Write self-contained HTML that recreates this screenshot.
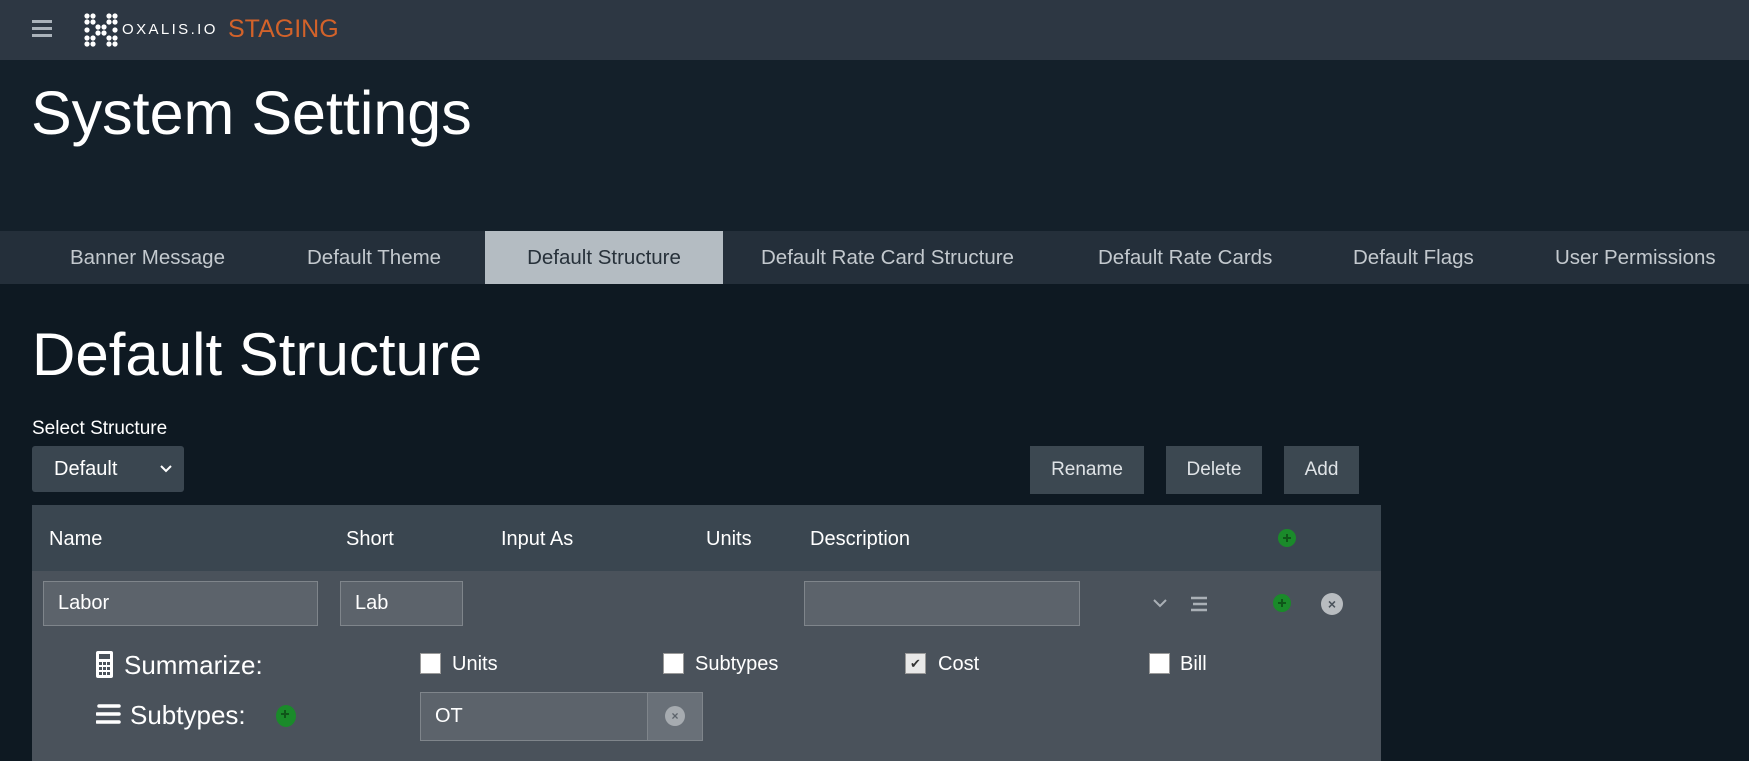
<!DOCTYPE html>
<html><head><meta charset="utf-8"><style>
*{box-sizing:border-box;margin:0;padding:0}
body{width:1749px;height:761px;overflow:hidden;background:#0e1922;font-family:"Liberation Sans",sans-serif;color:#fff;position:relative}
.a{position:absolute}
.nav{left:0;top:0;width:1749px;height:60px;background:#2d3743}
.hero{left:0;top:60px;width:1749px;height:171px;background:#14202a}
.tabs{left:0;top:231px;width:1749px;height:53px;background:#242f3a}
.tab{top:231px;height:53px;line-height:53px;font-size:20.5px;color:#c3c9ce}
.act{left:485px;width:238px;background:#b4bcc2;color:#27313a;text-align:center}
.btn{top:446px;height:48px;line-height:48px;background:#3c4851;color:#dfe3e6;font-size:19px;text-align:center}
.hd{left:32px;top:505px;width:1349px;height:66px;background:#3a4650}
.bd{left:32px;top:571px;width:1349px;height:190px;background:#4a525b}
.hl{top:528px;font-size:20px;color:#fff}
.in{height:45px;background:#5c636b;border:1px solid #7f858b;font-size:20px;line-height:43px;padding-left:14px;color:#fff}
.cb{width:21px;height:21px;background:#fff;border:1px solid #999}
.lbl{font-size:20px;color:#fff}
.plus{width:18px;height:18px;border-radius:50%;background:#1a8a2a}
.plus:before,.plus:after{content:"";position:absolute;left:5px;top:8px;width:8px;height:2px;background:#0f5519}
.plus:after{left:8px;top:5px;width:2px;height:8px}
.x{width:22px;height:22px;border-radius:50%;background:#b8bcc0;color:#4a525b;font-size:14px;line-height:22px;text-align:center;font-weight:bold}
.light{color:#fff;-webkit-text-stroke:0;font-weight:normal}
</style></head><body>
<div class="a nav"></div>
<div class="a" style="left:32px;top:20px;width:20px;height:3px;background:#aab2ba;box-shadow:0 7px 0 #aab2ba,0 14px 0 #aab2ba"></div>
<svg class="a" style="left:84px;top:13px" width="34" height="34" viewBox="0 0 34 34" fill="#fff">
<g><circle cx="3" cy="3" r="2.6"/><circle cx="9" cy="3" r="2.6"/><circle cx="25" cy="3" r="2.6"/><circle cx="31" cy="3" r="2.6"/><circle cx="9" cy="9" r="2.6"/><circle cx="25" cy="9" r="2.6"/><circle cx="3" cy="9" r="2.6"/><circle cx="31" cy="9" r="2.6"/><circle cx="14" cy="14" r="2.6"/><circle cx="20" cy="14" r="2.6"/><circle cx="14" cy="20" r="2.6"/><circle cx="20" cy="20" r="2.6"/><circle cx="3" cy="17" r="2.6"/><circle cx="31" cy="17" r="2.6"/><circle cx="9" cy="25" r="2.6"/><circle cx="25" cy="25" r="2.6"/><circle cx="3" cy="25" r="2.6"/><circle cx="31" cy="25" r="2.6"/><circle cx="3" cy="31" r="2.6"/><circle cx="9" cy="31" r="2.6"/><circle cx="25" cy="31" r="2.6"/><circle cx="31" cy="31" r="2.6"/></g></svg>
<div class="a" style="left:122px;top:20px;font-size:15px;letter-spacing:2.4px;color:#fff;line-height:20px">OXALIS.IO</div>
<div class="a" style="left:228px;top:14px;font-size:25px;color:#d2622a;line-height:30px">STAGING</div>
<div class="a hero"></div>
<div class="a" style="left:31px;top:76px;font-size:61px;color:#fff;line-height:74px">System Settings</div>
<div class="a tabs"></div>
<div class="a tab act">Default Structure</div>
<div class="a tab" style="left:70px">Banner Message</div>
<div class="a tab" style="left:307px">Default Theme</div>
<div class="a tab" style="left:761px">Default Rate Card Structure</div>
<div class="a tab" style="left:1098px">Default Rate Cards</div>
<div class="a tab" style="left:1353px">Default Flags</div>
<div class="a tab" style="left:1555px">User Permissions</div>
<div class="a" style="left:32px;top:319px;font-size:60px;color:#fff;line-height:72px">Default Structure</div>
<div class="a" style="left:32px;top:418px;font-size:19px;color:#fff">Select Structure</div>
<div class="a" style="left:32px;top:446px;width:152px;height:46px;background:#3a4650;border-radius:3px;font-size:20px;line-height:46px;padding-left:22px">Default<svg style="position:absolute;right:12px;top:19px" width="12" height="8"><path d="M1 1l5 5 5-5" stroke="#fff" stroke-width="2" fill="none"/></svg></div>
<div class="a btn" style="left:1030px;width:114px">Rename</div>
<div class="a btn" style="left:1166px;width:96px">Delete</div>
<div class="a btn" style="left:1284px;width:75px">Add</div>
<div class="a hd"></div><div class="a bd"></div>
<div class="a hl" style="left:49px">Name</div>
<div class="a hl" style="left:346px">Short</div>
<div class="a hl" style="left:501px">Input As</div>
<div class="a hl" style="left:706px">Units</div>
<div class="a hl" style="left:810px">Description</div>
<div class="a plus" style="left:1278px;top:529px"></div>
<div class="a in" style="left:43px;top:581px;width:275px">Labor</div>
<div class="a in" style="left:340px;top:581px;width:123px">Lab</div>
<div class="a in" style="left:804px;top:581px;width:276px"></div>
<svg class="a" style="left:1152px;top:597px" width="16" height="12"><path d="M2 3l6 6 6-6" stroke="#aab0b6" stroke-width="2" fill="none"/></svg>
<svg class="a" style="left:1190px;top:596px" width="20" height="16"><path d="M1 2h16M3 8h14M1 14h16" stroke="#aab0b6" stroke-width="2.5"/></svg>
<div class="a plus" style="left:1273px;top:594px"></div>
<div class="a x" style="left:1321px;top:593px">×</div>
<svg class="a" style="left:96px;top:651px" width="17" height="27"><rect x="0" y="0" width="17" height="27" rx="2" fill="#fff"/><rect x="3" y="3" width="11" height="5" fill="#4a525b"/><g fill="#4a525b"><rect x="3" y="11" width="3" height="3"/><rect x="7" y="11" width="3" height="3"/><rect x="11" y="11" width="3" height="3"/><rect x="3" y="16" width="3" height="3"/><rect x="7" y="16" width="3" height="3"/><rect x="11" y="16" width="3" height="3"/><rect x="3" y="21" width="3" height="3"/><rect x="7" y="21" width="3" height="3"/><rect x="11" y="21" width="3" height="3"/></g></svg>
<div class="a" style="left:124px;top:650px;font-size:26px;color:#fff">Summarize:</div>
<div class="a cb" style="left:420px;top:653px"></div><div class="a lbl" style="left:452px;top:653px">Units</div>
<div class="a cb" style="left:663px;top:653px"></div><div class="a lbl" style="left:695px;top:653px">Subtypes</div>
<div class="a cb" style="left:905px;top:653px;background:#e8e8e8;color:#333;font-size:13px;line-height:19px;text-align:center">&#10004;</div><div class="a lbl" style="left:938px;top:653px">Cost</div>
<div class="a cb" style="left:1149px;top:653px"></div><div class="a lbl" style="left:1180px;top:653px">Bill</div>
<svg class="a" style="left:96px;top:703px" width="26" height="22"><path d="M3 3h20M1 11h22M1 19h22" stroke="#fff" stroke-width="3.5" stroke-linecap="round"/></svg>
<div class="a" style="left:130px;top:700px;font-size:26px;color:#fff">Subtypes:</div>
<div class="a plus" style="left:276px;top:705px;width:20px;height:22px"></div>
<div class="a in" style="left:420px;top:692px;width:283px;height:49px;line-height:47px">OT</div>
<div class="a" style="left:647px;top:693px;width:55px;height:47px;background:#697078;border-left:1px solid #7f858b"></div>
<div class="a x" style="left:665px;top:706px;width:20px;height:20px;line-height:20px;font-size:12px;background:#a6abb0;color:#5c636b">×</div>
</body></html>
